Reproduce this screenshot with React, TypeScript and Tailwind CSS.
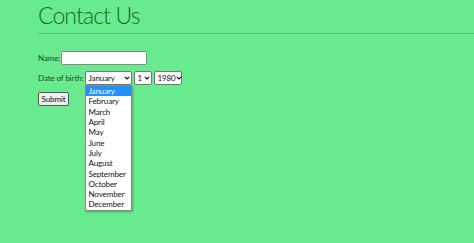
import React from 'react';

const months = [
    'January', 'February', 'March', 'April', 'May', 'June',
    'July', 'August', 'September', 'October', 'November', 'December',
];

const Chevron: React.FC = () => (
    <svg width="6" height="4" viewBox="0 0 6 4" className="ml-auto shrink-0">
        <path d="M0.8 0.8 L3 3 L5.2 0.8" fill="none" stroke="#111" strokeWidth="1.2" />
    </svg>
);

// Fake select box, native ones render differently in headless
const FakeSelect: React.FC<{ value: string; width: string }> = ({ value, width }) => (
    <div className={`${width} shrink-0 h-[14px] flex items-center bg-white border border-[#767676] rounded-[2px] pl-[2px] pr-px text-[#111]`}>
        <span>{value}</span>
        <Chevron />
    </div>
);

export default function App() {
    return (
        <div
            className="w-[474px] h-[243px] bg-[#68ea8e] text-[#1c4a28] text-[8px] tracking-[-0.1px] leading-none overflow-hidden whitespace-nowrap"
            style={{ fontFamily: 'Lato, "Noto Sans", sans-serif' }}
        >
            <div className="pl-[38px]">
                <h1 className="text-[23px] font-light tracking-[-0.9px] text-[#15692c] leading-none pt-[4px] h-[32px]">Contact Us</h1>
                <div className="h-px bg-[#58c878] mt-px"></div>

                <div className="mt-[17px] flex items-center gap-px">
                    <span>Name:</span>
                    <div className="w-[86px] shrink-0 h-[14px] bg-white border border-[#8a8a8a] rounded-[2px]"></div>
                </div>

                <div className="mt-[6px] flex items-center gap-[2px]">
                    <span>Date of birth:</span>
                    <div className="relative shrink-0">
                        <FakeSelect value="January" width="w-[47px]" />
                        <div className="absolute left-0 top-[14px] w-[47px] bg-white border border-[#8a8a8a] shadow-[1px_1px_2px_rgba(0,0,0,0.3)] z-10 text-[#111]">
                            {months.map((m, i) => (
                                <div
                                    key={m}
                                    className={`h-[10.3px] flex items-center pl-[2px] ${i === 0 ? 'bg-[#1e90ff] text-white' : ''}`}
                                >
                                    {m}
                                </div>
                            ))}
                        </div>
                    </div>
                    <FakeSelect value="1" width="w-[18px]" />
                    <FakeSelect value="1980" width="w-[28px]" />
                </div>

                <div className="mt-[7px]">
                    <div className="w-[31px] h-[14px] flex items-center justify-center bg-[#efefef] border border-[#555] rounded-[2px] text-[#111]">
                        Submit
                    </div>
                </div>
            </div>
        </div>
    );
}
